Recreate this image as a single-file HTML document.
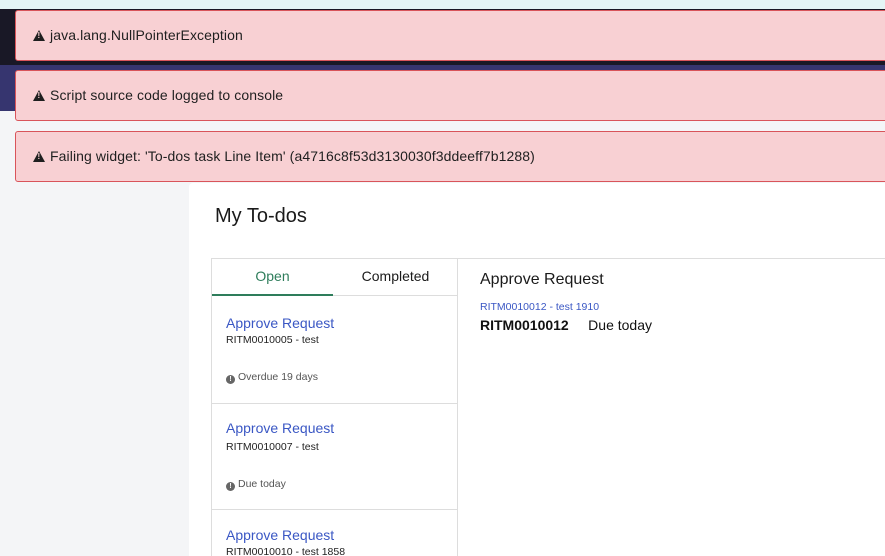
<!DOCTYPE html>
<html style="width:885px;height:556px;overflow:hidden"><head><style>
*{margin:0;padding:0;box-sizing:border-box}
body{width:885px;height:556px;overflow:hidden;background:#f4f5f7;font-family:"Liberation Sans",sans-serif;position:relative;color:#1a1a1a}
.a{position:absolute}
.alert{position:absolute;left:15px;width:885px;height:51px;background:#f8d0d3;border:1px solid #d9545a;border-radius:3px;font-size:14px;line-height:49px;padding-left:17px;color:#1f1f1f;letter-spacing:0.1px}
.tri{display:inline-block;width:0;height:0;border-left:6px solid transparent;border-right:6px solid transparent;border-bottom:11px solid #1f1f1f;vertical-align:-1px;margin-right:5px;position:relative}
.tri:after{content:"!";position:absolute;left:-1.5px;top:1px;color:#f8d0d3;font-size:8px;line-height:9px;font-weight:bold}
.item{position:absolute;left:212px;width:245px;border-bottom:1px solid #ddd;background:#fff;overflow:hidden}
.ttl{position:absolute;left:14px;top:12px;font-size:14px;color:#3a57c4}
.sub{position:absolute;left:14px;top:31px;font-size:10.5px;color:#222}
.due{position:absolute;left:14px;top:68px;font-size:10.5px;color:#555}
.ic{display:inline-block;width:9px;height:9px;border-radius:50%;background:#666;color:#fff;font-size:7px;line-height:9px;text-align:center;font-weight:bold;vertical-align:-1px;margin-right:3px}
</style></head><body>
<div class="a" style="left:0;top:0;width:885px;height:9px;background:#e4f5f6"></div>
<div class="a" style="left:0;top:9px;width:885px;height:56px;background:#191826"></div>
<div class="a" style="left:0;top:65px;width:885px;height:46px;background:#36356f"></div>
<div class="alert" style="top:10px"><span class="tri"></span>java.lang.NullPointerException</div>
<div class="alert" style="top:70px"><span class="tri"></span>Script source code logged to console</div>
<div class="alert" style="top:131px"><span class="tri"></span>Failing widget: 'To-dos task Line Item' (a4716c8f53d3130030f3ddeeff7b1288)</div>
<div class="a" style="left:189px;top:183px;width:696px;height:373px;background:#fff;border-radius:4px 0 0 0"></div>
<div class="a" style="left:215px;top:205px;font-size:20px;color:#1a1a1a">My To-dos</div>
<div class="a" style="left:211px;top:258px;width:674px;height:1px;background:#ddd"></div>
<div class="a" style="left:211px;top:258px;width:1px;height:298px;background:#ddd"></div>
<div class="a" style="left:457px;top:258px;width:1px;height:298px;background:#ddd"></div>
<div class="a" style="left:212px;top:295px;width:245px;height:1px;background:#ddd"></div>
<div class="a" style="left:212px;top:294px;width:121px;height:2px;background:#2e7d5b"></div>
<div class="a" style="left:212px;top:268px;width:121px;text-align:center;font-size:14px;color:#2e7d5b">Open</div>
<div class="a" style="left:335px;top:268px;width:121px;text-align:center;font-size:14px;color:#1a1a1a">Completed</div>
<div class="item" style="top:303px;height:101px"><div class="ttl">Approve Request</div><div class="sub">RITM0010005 - test</div><div class="due"><span class="ic">!</span>Overdue 19 days</div></div>
<div class="item" style="top:404px;height:106px"><div class="ttl" style="top:16px">Approve Request</div><div class="sub" style="top:37px">RITM0010007 - test</div><div class="due" style="top:74px"><span class="ic">!</span>Due today</div></div>
<div class="item" style="top:510px;height:46px;border:0"><div class="ttl" style="top:17px">Approve Request</div><div class="sub" style="top:36px">RITM0010010 - test 1858</div></div>
<div class="a" style="left:480px;top:271px;font-size:16px;color:#1a1a1a">Approve Request</div>
<div class="a" style="left:480px;top:301px;font-size:10.5px;color:#3a57c4">RITM0010012 - test 1910</div>
<div class="a" style="left:480px;top:317px;font-size:14px;color:#111"><b>RITM0010012</b>&nbsp;&nbsp;&nbsp;&nbsp;&nbsp;Due today</div>
</body></html>
